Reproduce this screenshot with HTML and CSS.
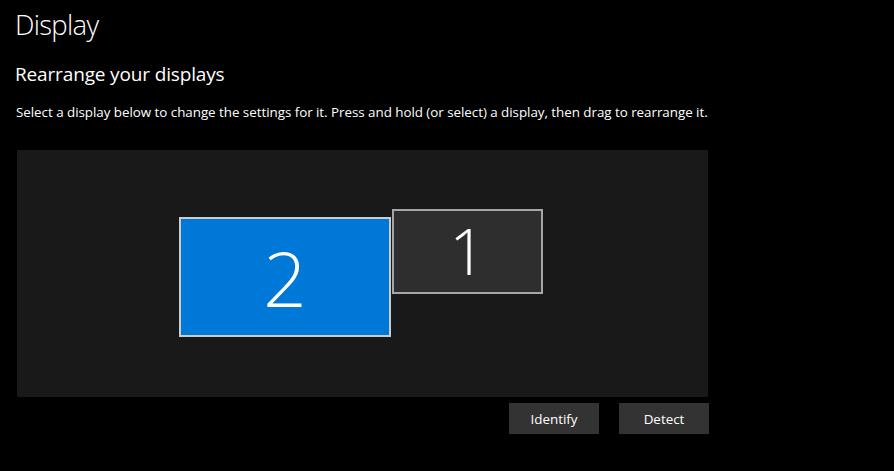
FILE: index.html
```html
<!DOCTYPE html>
<html>
<head>
<meta charset="utf-8">
<link rel="stylesheet" href="styles.css">
</head>
<body>
<div class="page">
  <h1 class="title">Display</h1>
  <h2 class="subtitle">Rearrange your displays</h2>
  <p class="desc">Select a display below to change the settings for it. Press and hold (or select) a display, then drag to rearrange it.</p>
  <div class="canvas">
    <div class="monitor monitor-2"><span>2</span></div>
    <div class="monitor monitor-1"><span>1</span></div>
  </div>
  <div class="actions">
    <button class="btn">Identify</button>
    <button class="btn">Detect</button>
  </div>
</div>
</body>
</html>
```

FILE: styles.css
```css
html, body {
  margin: 0;
  padding: 0;
  background: #000;
  width: 894px;
  height: 471px;
  overflow: hidden;
}
.page {
  padding: 0 0 0 15px;
  font-family: "Segoe UI", "Open Sans", "Noto Sans", sans-serif;
  color: #fff;
}
.title {
  margin: 0;
  padding-top: 5px;
  font-size: 27.5px;
  font-weight: 300;
  letter-spacing: -0.7px;
  line-height: 40px;
  height: 40px;
}
.subtitle {
  margin: 16px 0 0 0;
  font-size: 19px;
  font-weight: 400;
  letter-spacing: -0.15px;
  line-height: 26px;
}
.desc {
  margin: 15px 0 0 1px;
  font-size: 13.4px;
  letter-spacing: -0.04px;
  line-height: 20px;
}
.canvas {
  position: relative;
  margin: 28px 0 0 2px;
  width: 691px;
  height: 247px;
  background: #191919;
}
.monitor {
  position: absolute;
  box-sizing: border-box;
  display: flex;
  align-items: center;
  justify-content: center;
  font-weight: 300;
  color: #fff;
}
.monitor-2 {
  left: 162px;
  top: 67px;
  width: 212px;
  height: 120px;
  background: #0078d7;
  border: 2px solid #cccccc;
  font-size: 76px;
}
.monitor-2 span { margin-top: 0; }
.monitor-1 {
  left: 375px;
  top: 59px;
  width: 151px;
  height: 85px;
  background: #2e2e2e;
  border: 2px solid #a6a6a6;
  font-size: 64px;
}
.monitor-1 span { margin-top: -3px; }
.actions {
  display: flex;
  gap: 20px;
  width: 694px;
  justify-content: flex-end;
  margin-top: 6px;
}
.btn {
  width: 90px;
  height: 31px;
  border: none;
  background: #333333;
  color: #fff;
  font-family: "Segoe UI", "Open Sans", "Noto Sans", sans-serif;
  font-size: 13.4px;
  padding: 0;
}
```
